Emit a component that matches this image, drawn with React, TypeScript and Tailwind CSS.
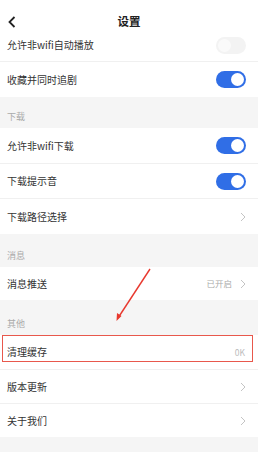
import React from "react";

const font = { fontFamily: '"Noto Sans CJK SC", "Noto Sans", sans-serif' };

function Toggle({ on }: { on: boolean }) {
  if (on) {
    return (
      <div className="w-[30px] h-[17px] rounded-full bg-[#306ee6] flex items-center justify-end pr-[2px]">
        <div className="w-[13px] h-[13px] rounded-full bg-white" />
      </div>
    );
  }
  return (
    <div className="w-[30px] h-[17px] rounded-full bg-[#f3f3f3] flex items-center justify-start pl-[2px]">
      <div className="w-[13px] h-[13px] rounded-full bg-[#fafafa]" />
    </div>
  );
}

function Chevron() {
  return (
    <svg width="6" height="10" viewBox="0 0 6 10" className="block">
      <path d="M1 1 L5 5 L1 9" fill="none" stroke="#c4c4c4" strokeWidth="1" />
    </svg>
  );
}

function Row({
  label,
  right,
  h,
  border = true,
}: {
  label: string;
  right?: React.ReactNode;
  h: string;
  border?: boolean;
}) {
  return (
    <div
      className={`flex items-center justify-between pl-[7px] pr-[12px] bg-white ${h} ${
        border ? "border-b border-[#f0f0f0]" : ""
      }`}
    >
      <span className="text-[10px] leading-[14px] text-[#333]">{label}</span>
      {right}
    </div>
  );
}

function Section({ label, h }: { label: string; h: string }) {
  return (
    <div className={`bg-[#f5f5f5] flex items-end pl-[7px] ${h}`}>
      <span className="text-[9px] leading-[12px] text-[#aaa] pb-[5px]">{label}</span>
    </div>
  );
}

export default function App() {
  return (
    <div className="w-[263px] h-[452px] bg-white overflow-hidden relative" style={font}>
      <div className="w-[258px]">
        <div className="h-[29px] relative flex justify-center pt-[13px]">
          <svg
            width="8"
            height="12"
            viewBox="0 0 8 12"
            className="absolute left-[8px] top-[16px]"
          >
            <path d="M6.5 1 L1.5 6 L6.5 11" fill="none" stroke="#222" strokeWidth="1.8" />
          </svg>
          <span className="text-[11.5px] leading-[16px] font-bold text-[#222]">设置</span>
        </div>
        <Row label="允许非wifi自动播放" h="h-[33px]" right={<Toggle on={false} />} />
        <Row label="收藏并同时追剧" h="h-[35px]" border={false} right={<Toggle on />} />
        <Section label="下载" h="h-[31px]" />
        <Row label="允许非wifi下载" h="h-[36px]" right={<Toggle on />} />
        <Row label="下载提示音" h="h-[35px]" right={<Toggle on />} />
        <Row label="下载路径选择" h="h-[35px]" border={false} right={<Chevron />} />
        <Section label="消息" h="h-[33px]" />
        <Row
          label="消息推送"
          h="h-[33px]"
          border={false}
          right={
            <div className="flex items-center gap-[8px]">
              <span className="text-[8.5px] text-[#aaa]">已开启</span>
              <Chevron />
            </div>
          }
        />
        <Section label="其他" h="h-[35px]" />
        <Row
          label="清理缓存"
          h="h-[35px]"
          right={<span className="text-[8.5px] text-[#bbb] pr-[1px]">0K</span>}
        />
        <Row label="版本更新" h="h-[34px]" right={<Chevron />} />
        <Row label="关于我们" h="h-[33px]" border={false} right={<Chevron />} />
        <div className="bg-[#f5f5f5] h-[20px]" />
      </div>
      {/* annotation box */}
      <div className="absolute left-[2px] top-[335px] w-[251px] h-[27px] border border-[#e8584c] pointer-events-none" />
      {/* annotation arrow */}
      <svg
        className="absolute left-0 top-0 pointer-events-none"
        width="263"
        height="452"
        viewBox="0 0 263 452"
      >
        <line x1="150" y1="269" x2="118" y2="318" stroke="#e8382e" strokeWidth="1.4" />
        <polygon points="116.5,321 117,313 121.5,316" fill="#e8382e" />
      </svg>
    </div>
  );
}
